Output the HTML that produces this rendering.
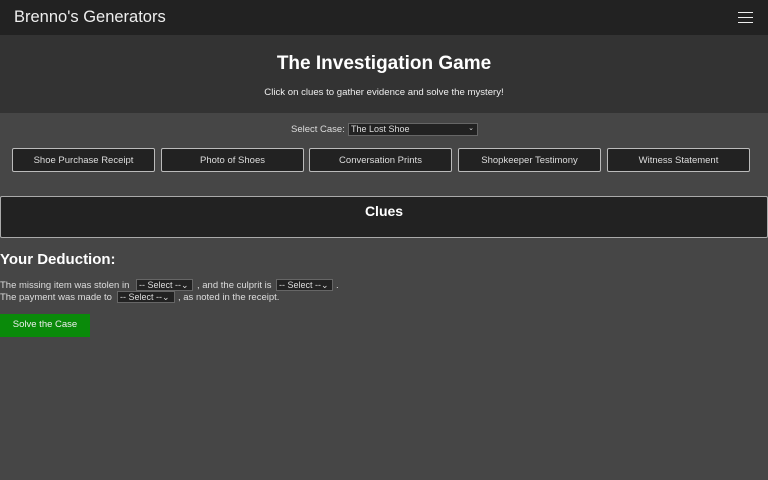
<!DOCTYPE html>
<html><head><style>
*{box-sizing:border-box;margin:0;padding:0}
body{width:768px;height:480px;background:#464646;font-family:"Liberation Sans",sans-serif;color:#eee;overflow:hidden;position:relative}
.nav{height:35px;background:#222;position:relative}
.nav span{position:absolute;left:14px;top:8px;font-size:16.5px;color:#eee;font-family:"Liberation Sans",sans-serif}
.hb{position:absolute;left:738px;top:12px;width:15px}
.hb i{display:block;height:1px;background:#eee;margin-bottom:4px}
.hdr{height:78px;background:#333;text-align:center}
.hdr h1{font-size:19px;font-weight:bold;padding-top:18px;color:#fff}
.hdr p{font-size:9.6px;margin-top:12px;color:#eee}
.abs{position:absolute}
.sel{background:#222;border:1px solid #666;color:#ddd;font-size:9px;height:12px;line-height:10px;padding-left:2px}
.btn{position:absolute;top:148px;width:143px;height:24px;background:#222;border:1px solid #bbb;border-radius:2px;font-size:9.5px;color:#ddd;text-align:center;line-height:24px}
.clues{position:absolute;left:0;top:196px;width:768px;height:42px;background:#222;border:1px solid #aaa;border-radius:2px;text-align:center;font-size:14px;font-weight:bold;color:#fff;padding-top:6px}
.t{font-size:9.5px;color:#ddd}
</style></head><body>
<div class="nav"><span>Brenno's Generators</span><div class="hb"><i></i><i></i><i></i></div></div>
<div class="hdr"><h1>The Investigation Game</h1><p>Click on clues to gather evidence and solve the mystery!</p></div>
<div class="abs t" style="left:291px;top:124px">Select Case:</div>
<div class="abs sel" style="left:348px;top:123px;width:130px;height:13px">The Lost Shoe<span style="position:absolute;right:3px;font-size:7px">⌄</span></div>
<div class="btn" style="left:12px">Shoe Purchase Receipt</div>
<div class="btn" style="left:161px">Photo of Shoes</div>
<div class="btn" style="left:309px">Conversation Prints</div>
<div class="btn" style="left:458px">Shopkeeper Testimony</div>
<div class="btn" style="left:607px">Witness Statement</div>
<div class="clues">Clues</div>
<div class="abs" style="left:0;top:251px;font-size:15px;font-weight:bold;color:#fff">Your Deduction:</div>
<div class="abs t" style="left:0;top:280px">The missing item was stolen in</div>
<div class="abs sel" style="left:136px;top:279px;width:57px">-- Select --⌄</div>
<div class="abs t" style="left:197px;top:280px">, and the culprit is</div>
<div class="abs sel" style="left:276px;top:279px;width:57px">-- Select --⌄</div>
<div class="abs t" style="left:336px;top:280px">.</div>
<div class="abs t" style="left:0;top:292px">The payment was made to</div>
<div class="abs sel" style="left:117px;top:291px;width:58px">-- Select --⌄</div>
<div class="abs t" style="left:178px;top:292px">, as noted in the receipt.</div>
<div class="abs" style="left:0;top:314px;width:90px;height:23px;background:#0a8a0a;color:#eee;font-size:9.5px;text-align:center;line-height:22px">Solve the Case</div>
</body></html>
